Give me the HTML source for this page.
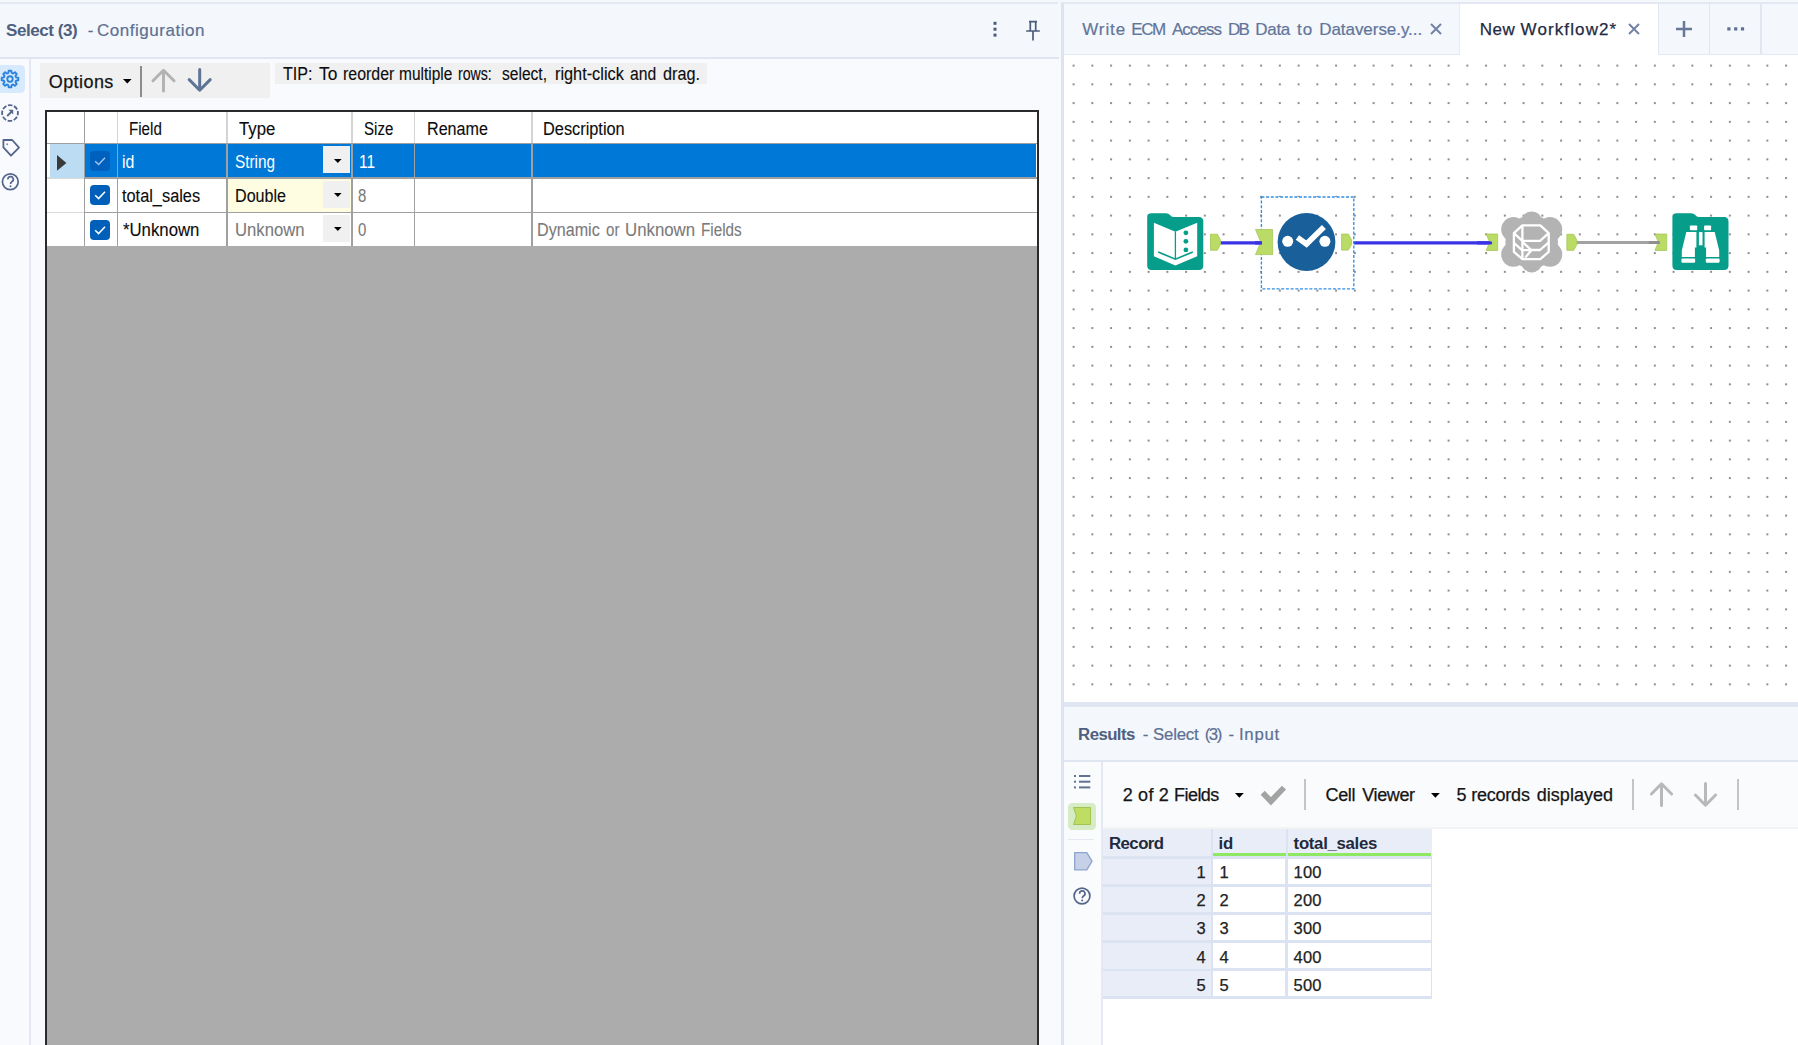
<!DOCTYPE html>
<html lang="en">
<head>
<meta charset="utf-8">
<title>Select (3) - Configuration</title>
<style>
*{box-sizing:border-box;margin:0;padding:0}
html,body{width:1798px;height:1045px;overflow:hidden;background:#f9fafd}
body{position:relative;font-family:"Liberation Sans",sans-serif;color:#1b1b1b}
.a{position:absolute}
.t{position:absolute;white-space:nowrap;line-height:1;transform-origin:0 0}
svg{position:absolute;overflow:visible}
/* ---------- left: configuration panel ---------- */
#cfgHead{left:0;top:0;width:1061px;height:57px;background:#f4f7fb}
#topStrip{left:0;top:0;width:1798px;height:4px;background:#f4f7fb}
#topLine{left:0;top:2px;width:1058px;height:2px;background:#e4e8f2}
#topLine2{left:1061px;top:2px;width:737px;height:2px;background:#e4e8f2}
#cfgHeadLine{left:0;top:56.6px;width:1059px;height:2px;background:#e0e5f2}
#cfgSideLine{left:29px;top:59px;width:2px;height:986px;background:#e3e8f4}
#gearBg{left:0;top:65px;width:24.5px;height:27.6px;background:#d7e9fc;border-radius:0 4.5px 4.5px 0}
#optBar{left:40px;top:63px;width:230px;height:35px;background:#f0f0f0}
#optSep{left:140px;top:66px;width:2px;height:31px;background:#8c8c8c}
#tipBg{left:275px;top:63px;width:432px;height:21px;background:#f0f0f0}
/* grid */
#grid{left:44.8px;top:110px;width:994.2px;height:940px;background:#acacac;border:2.2px solid #2a2a2a}
#gridWhite{left:47px;top:112px;width:990px;height:134px;background:#fff}
.vl{position:absolute;width:1.5px;background:#a0a0a0}
.hl{position:absolute;height:1.5px;background:#a0a0a0}
#selRow{left:85px;top:144px;width:950.6px;height:34px;background:#0078d7}
#selHdr{left:49.8px;top:144.2px;width:33.8px;height:34.2px;z-index:2;background:#bcdcf4}
#dblCell{left:228px;top:179px;width:123px;height:33px;background:#fffde1}
.dd{position:absolute;left:323px;width:27px;height:27px;background:#f0f0f0}
.cb{position:absolute;left:90px;width:20px;height:20px;border-radius:4px;background:#005fb8}
.g{color:#0c0c0c;-webkit-text-stroke:.12px currentColor}
.gray{color:#7a7a7a}

.hb{font-weight:700;color:#4f5f80}
.hlt{color:#5d7094;-webkit-text-stroke:.2px currentColor}
.vl.hd{background:#d4d4d4}
.hl.lt{background:#dadada}
.w{color:#fff;-webkit-text-stroke:0}
.g.gray{-webkit-text-stroke:.1px currentColor}
/* ---------- right side ---------- */
#midLine{z-index:5;left:1060.9px;top:3px;width:2.8px;height:1042px;background:#dde3f0}
#tabBar{left:1063px;top:4px;width:735px;height:50px;background:#f4f7fb}
#tabLine{left:1063px;top:53.6px;width:735px;height:1.6px;background:#e4e9f3}
#tabActive{left:1460px;top:4px;width:197.5px;height:51px;background:#fff}
.tsep{position:absolute;top:4px;width:1.5px;height:50px;background:#e1e6f1}
#canvas{left:1063px;top:55px;width:735px;height:647px;background:#fff}
#resBand{left:1063px;top:702px;width:735px;height:5px;background:#dfe5f1}
#resHead{left:1063px;top:707px;width:735px;height:53px;background:#f4f7fb}
#resHeadLine{left:1063px;top:760px;width:735px;height:2px;background:#dfe5f1}
#resSide{left:1063px;top:762px;width:38px;height:283px;background:#fafbfd}
#resSideLine{left:1101px;top:762px;width:2px;height:283px;background:#e4e9f4}
#resTool{left:1103px;top:762px;width:695px;height:65px;background:#fafbfd}
#resToolLine{left:1103px;top:827px;width:695px;height:2.2px;background:#f2f3f5}
#resBody{left:1103px;top:829px;width:695px;height:216px;background:#fff}

.tin{color:#62759a;-webkit-text-stroke:.2px currentColor}
.tac{color:#1f2a44;-webkit-text-stroke:.25px currentColor}


#ancBg{left:1068.4px;top:803px;width:27.6px;height:27.4px;background:#d6ecc6;border-radius:4.5px}
#resSideSep{left:1068.4px;top:838.6px;width:26px;height:1.4px;background:#e3e8f3}
.tb{color:#151515;-webkit-text-stroke:.25px currentColor}
.tbsep{top:779.2px;width:1.9px;height:31px;background:#c4c4c4}
#rtBg{left:1103.2px;top:829.3px;width:329px;height:169.5px;background:#dbe2f1}
#rtHdr{left:1103.2px;top:829.3px;width:329px;height:27px;background:#e9edf8}
#rtNum{left:1103.2px;top:856px;width:107.6px;height:142.8px;background:#e9edf8}
#rtUl1{left:1213.2px;top:853.2px;width:72.4px;height:3px;background:#8fe862}
#rtUl2{left:1288.2px;top:853.2px;width:142.6px;height:3px;background:#8fe862}
.rc{background:#fff}
.rl{background:#dbe2f1}
.rb{font-weight:700;color:#222b3e}
.rd{color:#222;-webkit-text-stroke:.25px currentColor}
</style>
</head>
<body>
<!-- LEFT PANEL -->
<div class="a" id="cfgHead"></div>
<div class="a" id="topStrip"></div>
<div class="a" id="topLine"></div>
<div class="a" id="topLine2"></div>
<div class="a" id="cfgHeadLine"></div>
<div class="a" id="cfgSideLine"></div>
<div class="a" id="gearBg"></div>
<div class="a" id="optBar"></div>
<div class="a" id="optSep"></div>
<div class="a" id="tipBg"></div>
<div class="a" id="grid"></div>
<div class="a" id="gridWhite"></div>


<!-- header text -->
<span class="t hb" id="hSel" style="left:6.10px;top:22px;font-size:17px;letter-spacing:-0.444px">Select (3)</span>
<span class="t hlt" id="hCfga" style="left:87.80px;top:22px;font-size:17px;letter-spacing:-0.072px">-</span><span class="t hlt" id="hCfgb" style="left:96.90px;top:22px;font-size:17px;letter-spacing:0.531px">Configuration</span>
<!-- header icons: kebab + pin -->
<svg id="kebab" style="left:992px;top:20px" width="6" height="18" viewBox="0 0 6 18"><g fill="#4b5b7c"><rect x="1.5" y="1.8" width="3" height="3"/><rect x="1.5" y="7.7" width="3" height="3"/><rect x="1.5" y="13.6" width="3" height="3"/></g></svg>
<svg id="pin" style="left:1025px;top:20px" width="16" height="22" viewBox="0 0 16 22"><g fill="none" stroke="#4b5b7c" stroke-width="1.7"><path d="M4 1.6 H12 M5.3 1.6 V10.4 M10.7 1.6 V10.4 M1.2 11 H14.8 M8 11 V20.5"/></g></svg>
<!-- sidebar icons -->
<svg id="icoGear" style="left:-0.7px;top:67.8px" width="22" height="22" viewBox="-11 -11 22 22"><g fill="none" stroke="#2a83dc" stroke-width="1.9" stroke-linejoin="round"><circle r="2.7"/><path d="M-1.31 -8.30 L1.31 -8.30 L1.68 -6.07 L3.10 -5.48 L4.94 -6.80 L6.80 -4.94 L5.48 -3.10 L6.07 -1.68 L8.30 -1.31 L8.30 1.31 L6.07 1.68 L5.48 3.10 L6.80 4.94 L4.94 6.80 L3.10 5.48 L1.68 6.07 L1.31 8.30 L-1.31 8.30 L-1.68 6.07 L-3.10 5.48 L-4.94 6.80 L-6.80 4.94 L-5.48 3.10 L-6.07 1.68 L-8.30 1.31 L-8.30 -1.31 L-6.07 -1.68 L-5.48 -3.10 L-6.80 -4.94 L-4.94 -6.80 L-3.10 -5.48 L-1.68 -6.07 Z"/></g></svg>
<svg id="icoNav" style="left:-0.7px;top:101.8px" width="22" height="22" viewBox="-11 -11 22 22"><g fill="none" stroke="#53668a" stroke-width="1.8"><circle r="7.9" stroke-dasharray="4.6 1.6" stroke-dashoffset="2.3"/><path d="M-2.8 3 L1.6 -1.4" stroke-width="1.9"/><path d="M-1.6 -3.2 H3.2 V1.6 Z" fill="#53668a" stroke="none"/></g></svg>
<svg id="icoTag" style="left:0;top:130px" width="24" height="30" viewBox="0 130 24 30"><g fill="none" stroke="#53668a" stroke-width="1.8" stroke-linejoin="round"><path d="M3.4 140 H12.2 L19 147.7 L11 155.7 L3.4 147.4 Z"/><circle cx="7.2" cy="144.2" r="1" fill="#8090ad" stroke="none"/></g></svg>
<svg id="icoHelp" style="left:-0.8px;top:170.3px" width="22" height="22" viewBox="-11 -11 22 22"><g fill="none" stroke="#53668a" stroke-width="1.7"><circle r="7.9" cx=".3" cy=".7"/><path d="M-2.4 -1.8 a2.7 2.7 0 1 1 3.9 2.3 q-1.2 .6 -1.2 2.2" transform="translate(.3 .2)"/><circle cx=".5" cy="5.2" r="1" fill="#53668a" stroke="none"/></g></svg>
<!-- options bar -->
<span class="t tb" id="opt" style="left:48.70px;top:73px;font-size:18px;letter-spacing:0.442px">Options</span>
<svg id="optArrow" style="left:122.6px;top:79.3px" width="9" height="5" viewBox="0 0 9 5"><path d="M0 0 H8.6 L4.3 4.5 Z" fill="#000"/></svg>
<svg id="arrUp" style="left:150px;top:67px" width="28" height="26" viewBox="0 0 28 26"><path d="M13.5 24 V3.5 M3 13.8 L13.5 3.3 L24 13.8" fill="none" stroke="#b3b3b3" stroke-width="3" stroke-linecap="round" stroke-linejoin="round"/></svg>
<svg id="arrDn" style="left:185.5px;top:67px" width="28" height="26" viewBox="0 0 28 26"><path d="M13.7 2.5 V23 M3.2 12.6 L13.7 23.2 L24.2 12.6" fill="none" stroke="#5f7395" stroke-width="3" stroke-linecap="round" stroke-linejoin="round"/></svg>
<span class="t g" id="tipa" style="left:283.00px;top:66px;font-size:17.5px;transform:scaleX(0.9192)">TIP:</span><span class="t g" id="tipb" style="left:318.80px;top:66px;font-size:17.5px;transform:scaleX(0.9900)">To</span><span class="t g" id="tipc" style="left:342.60px;top:66px;font-size:17.5px;transform:scaleX(0.9092)">reorder</span><span class="t g" id="tipd" style="left:398.90px;top:66px;font-size:17.5px;transform:scaleX(0.8837)">multiple</span><span class="t g" id="tipe" style="left:457.70px;top:66px;font-size:17.5px;transform:scaleX(0.8084)">rows:</span><span class="t g" id="tipf" style="left:501.50px;top:66px;font-size:17.5px;transform:scaleX(0.8897)">select,</span><span class="t g" id="tipg" style="left:555.30px;top:66px;font-size:17.5px;transform:scaleX(0.9309)">right-click</span><span class="t g" id="tiph" style="left:630.40px;top:66px;font-size:17.5px;transform:scaleX(0.8972)">and</span><span class="t g" id="tipi" style="left:662.90px;top:66px;font-size:17.5px;transform:scaleX(0.9275)">drag.</span>
<!-- grid body -->
<div class="a" id="selRow"></div>
<div class="a" id="selHdr"></div>
<div class="a" id="dblCell"></div>
<div class="vl" style="left:83.6px;top:112px;height:134px"></div>
<div class="vl" style="left:116.6px;top:144px;height:102px"></div>
<div class="vl" style="left:226.2px;top:144px;height:102px"></div>
<div class="vl" style="left:351.2px;top:144px;height:102px"></div>
<div class="vl" style="left:413.6px;top:144px;height:102px"></div>
<div class="vl" style="left:531.2px;top:144px;height:102px"></div>
<div class="vl hd" style="left:116.6px;top:112px;height:32px"></div>
<div class="vl hd" style="left:226.2px;top:112px;height:32px"></div>
<div class="vl hd" style="left:351.2px;top:112px;height:32px"></div>
<div class="vl hd" style="left:413.6px;top:112px;height:32px"></div>
<div class="vl hd" style="left:531.2px;top:112px;height:32px"></div>
<div class="hl" style="left:47px;top:142.8px;width:990px"></div>
<div class="hl" style="left:85px;top:177.3px;width:952px"></div>
<div class="hl" style="left:85px;top:211.6px;width:952px"></div>
<div class="hl lt" style="left:47px;top:177.3px;width:37px"></div>
<div class="hl lt" style="left:47px;top:211.6px;width:37px"></div>
<!-- row header arrow -->
<svg id="rowArrow" style="z-index:3;left:57px;top:154.5px" width="10" height="16" viewBox="0 0 10 16"><path d="M0 0 L9.4 7.9 L0 15.8 Z" fill="#3a3a3a"/></svg>
<!-- checkboxes -->
<div class="cb" style="top:151px;background:#0060bd"></div>
<div class="cb" style="top:185.4px"></div>
<div class="cb" style="top:219.7px"></div>
<svg id="chk1" style="left:90px;top:151px" width="20" height="20" viewBox="0 0 20 20"><path d="M5.2 10.2 L8.6 13.6 L15 6.8" fill="none" stroke="#a4c8ee" stroke-width="1.4"/></svg>
<svg id="chk2" style="left:90px;top:185.4px" width="20" height="20" viewBox="0 0 20 20"><path d="M5.2 10.2 L8.6 13.6 L15 6.8" fill="none" stroke="#fff" stroke-width="1.5"/></svg>
<svg id="chk3" style="left:90px;top:219.7px" width="20" height="20" viewBox="0 0 20 20"><path d="M5.2 10.2 L8.6 13.6 L15 6.8" fill="none" stroke="#fff" stroke-width="1.5"/></svg>
<!-- dropdown buttons -->
<div class="dd" style="top:146px"></div>
<div class="dd" style="top:180.5px"></div>
<div class="dd" style="top:214.8px"></div>
<svg id="dda1" style="left:333.5px;top:158.5px" width="8" height="5" viewBox="0 0 8 5"><path d="M0 0 H7.6 L3.8 4 Z" fill="#000"/></svg>
<svg id="dda2" style="left:333.5px;top:192.8px" width="8" height="5" viewBox="0 0 8 5"><path d="M0 0 H7.6 L3.8 4 Z" fill="#000"/></svg>
<svg id="dda3" style="left:333.5px;top:227.1px" width="8" height="5" viewBox="0 0 8 5"><path d="M0 0 H7.6 L3.8 4 Z" fill="#000"/></svg>
<!-- grid text -->
<span class="t g" id="gF" style="left:129.40px;top:121px;font-size:17.5px;transform:scaleX(0.8646)">Field</span>
<span class="t g" id="gT" style="left:238.90px;top:121px;font-size:17.5px;transform:scaleX(0.9564)">Type</span>
<span class="t g" id="gS" style="left:363.70px;top:121px;font-size:17.5px;transform:scaleX(0.8606)">Size</span>
<span class="t g" id="gR" style="left:426.70px;top:121px;font-size:17.5px;transform:scaleX(0.9205)">Rename</span>
<span class="t g" id="gD" style="left:543.40px;top:121px;font-size:17.5px;transform:scaleX(0.9332)">Description</span>
<span class="t g w" id="r1a" style="left:122.20px;top:154px;font-size:17.5px;transform:scaleX(0.9101)">id</span>
<span class="t g w" id="r1b" style="left:234.70px;top:154px;font-size:17.5px;transform:scaleX(0.8771)">String</span>
<span class="t g w" id="r1c" style="left:359.00px;top:154px;font-size:17.5px;transform:scaleX(0.8860)">11</span>
<span class="t g" id="r2a" style="left:121.60px;top:188px;font-size:17.5px;transform:scaleX(0.9334)">total_sales</span>
<span class="t g" id="r2b" style="left:234.70px;top:188px;font-size:17.5px;transform:scaleX(0.9212)">Double</span>
<span class="t g gray" id="r2c" style="left:357.70px;top:188px;font-size:17.5px;transform:scaleX(0.8526)">8</span>
<span class="t g" id="r3a" style="left:123.30px;top:222px;font-size:17.5px;transform:scaleX(0.9576)">*Unknown</span>
<span class="t g gray" id="r3b" style="left:234.70px;top:222px;font-size:17.5px;transform:scaleX(0.9525)">Unknown</span>
<span class="t g gray" id="r3c" style="left:357.70px;top:222px;font-size:17.5px;transform:scaleX(0.8526)">0</span>
<span class="t g gray" id="r3da" style="left:537.40px;top:222px;font-size:17.5px;transform:scaleX(0.9210)">Dynamic</span><span class="t g gray" id="r3db" style="left:606.10px;top:222px;font-size:17.5px;transform:scaleX(0.8610)">or</span><span class="t g gray" id="r3dc" style="left:625.10px;top:222px;font-size:17.5px;transform:scaleX(0.9607)">Unknown</span><span class="t g gray" id="r3dd" style="left:701.20px;top:222px;font-size:17.5px;transform:scaleX(0.8718)">Fields</span>

<!-- RIGHT SIDE -->
<div class="a" id="midLine"></div>
<div class="a" id="tabBar"></div>
<div class="a" id="tabLine"></div>
<div class="a" id="tabActive"></div>
<div class="a" id="canvas"></div>

<!-- tabs -->
<div class="tsep" style="left:1458.6px;background:#e6eaf4"></div>
<div class="tsep" style="left:1657.7px"></div>
<div class="tsep" style="left:1708.8px"></div>
<div class="tsep" style="left:1760px"></div>
<span class="t tin" id="tab1a" style="left:1082.20px;top:21px;font-size:17px;letter-spacing:0.910px">Write</span><span class="t tin" id="tab1b" style="left:1131.20px;top:21px;font-size:17px;letter-spacing:-1.341px">ECM</span><span class="t tin" id="tab1c" style="left:1171.90px;top:21px;font-size:17px;letter-spacing:-0.939px">Access</span><span class="t tin" id="tab1d" style="left:1228.00px;top:21px;font-size:17px;letter-spacing:-1.825px">DB</span><span class="t tin" id="tab1e" style="left:1255.30px;top:21px;font-size:17px;letter-spacing:-0.307px">Data</span><span class="t tin" id="tab1f" style="left:1296.90px;top:21px;font-size:17px;letter-spacing:1.012px">to</span><span class="t tin" id="tab1g" style="left:1319.20px;top:21px;font-size:17px;letter-spacing:-0.048px">Dataverse.y...</span>
<span class="t tac" id="tab2a" style="left:1479.80px;top:21px;font-size:17px;letter-spacing:0.442px">New</span><span class="t tac" id="tab2b" style="left:1520.60px;top:21px;font-size:17px;letter-spacing:1.105px">Workflow2*</span>
<svg id="x1" style="left:1429.5px;top:23px" width="12" height="12" viewBox="0 0 12 12"><path d="M1 1 L11 11 M11 1 L1 11" stroke="#7383a3" stroke-width="2" fill="none"/></svg>
<svg id="x2" style="left:1627.7px;top:23px" width="12" height="12" viewBox="0 0 12 12"><path d="M1 1 L11 11 M11 1 L1 11" stroke="#7383a3" stroke-width="2" fill="none"/></svg>
<svg id="plus" style="left:1676px;top:21px" width="16" height="16" viewBox="0 0 16 16"><path d="M8 0 V16 M0 8 H16" stroke="#687899" stroke-width="2.5" fill="none"/></svg>
<svg id="more" style="left:1727px;top:27.4px" width="18" height="4" viewBox="0 0 18 4"><g fill="#5e6f91"><rect x=".3" y=".3" width="3.2" height="3.2"/><rect x="7.1" y=".3" width="3.2" height="3.2"/><rect x="13.9" y=".3" width="3.2" height="3.2"/></g></svg>
<!-- canvas -->
<svg id="cv" style="left:1063px;top:55px" width="735" height="647" viewBox="1063 55 735 647">
<defs>
<pattern id="dots" x="1072.6" y="64.6" width="18.75" height="18.75" patternUnits="userSpaceOnUse"><rect x="0" y="0" width="2" height="2" fill="#8e8e8e"/></pattern>
<g id="aOut"><path d="M.6 .3 H7.4 L10.6 6.2 V10.4 L7.4 16.3 H.6 Z" fill="#badb66" stroke="#a9ca5c" stroke-width=".9" stroke-linejoin="round"/></g>
</defs>
<rect x="1063" y="55" width="735" height="646" fill="url(#dots)"/>
<!-- connections -->
<path d="M1220 242.9 H1262" stroke="#3a33e6" stroke-width="3.4" fill="none"/>
<path d="M1352 242.9 H1491" stroke="#3a33e6" stroke-width="3.4" fill="none"/>
<path d="M1576 242.6 H1661" stroke="#a2a2a2" stroke-width="3" fill="none"/>
<!-- selection box -->
<rect x="1261.4" y="197" width="92.4" height="91.8" fill="#fff"/>
<rect x="1277" y="213" width="60" height="60" fill="url(#dots)"/>
<rect x="1261.4" y="197" width="92.4" height="91.8" fill="none" stroke="#318ee8" stroke-width="1.35" stroke-dasharray="3 1.7"/>
<!-- input data tool -->
<g id="tInput">
<path d="M1151.5 213.2 H1166 Q1168.5 213.2 1170 215 Q1171.3 217 1173.5 217 H1198.8 Q1203.3 217 1203.3 221.5 V265.5 Q1203.3 270 1198.8 270 H1151.7 Q1147.2 270 1147.2 265.5 V217.5 Q1147.2 213.2 1151.5 213.2 Z" fill="#069d8b"/>
<path d="M1153.9 222.8 L1175.4 231.7 L1197.2 222.8 V256.2 L1175.4 265.5 L1153.9 256.2 Z" fill="#fff"/>
<path d="M1175.4 231.5 V259" stroke="#069d8b" stroke-width="1.3"/>
<path d="M1158.2 252 L1175.4 259.2 L1192.8 252" stroke="#069d8b" stroke-width="1.7" fill="none"/>
<circle cx="1185.9" cy="232.8" r="2.4" fill="#069d8b"/><circle cx="1185.9" cy="241.3" r="2.4" fill="#069d8b"/><circle cx="1185.9" cy="249.9" r="2.4" fill="#069d8b"/>
</g>
<use href="#aOut" x="1209.9" y="233.9"/>
<!-- select tool -->
<path d="M1255.5 229.5 H1272.6 V254.6 H1255.5 L1260.8 242.1 Z" fill="#badb66" stroke="#a5c659" stroke-width=".8"/>
<path d="M1255 242.9 H1262" stroke="#3a33e6" stroke-width="3.4" fill="none"/>
<circle cx="1306.5" cy="242" r="28.9" fill="#19609a"/>
<circle cx="1287.7" cy="241.3" r="5.5" fill="#fff"/><circle cx="1324.9" cy="241.3" r="5.5" fill="#fff"/>
<path d="M1297.4 237.4 L1306.5 244.1 L1323.9 226.9" fill="none" stroke="#fff" stroke-width="5.6"/>
<use href="#aOut" x="1341" y="233.8"/>
<!-- grey in-db tool -->
<path d="M1486.2 234 H1497.7 V250.5 H1486.2 L1489.6 242.2 Z" fill="#badb66" stroke="#a5c659" stroke-width=".8"/>
<path d="M1478 242.9 H1490.5" stroke="#3a33e6" stroke-width="3.4" stroke-linecap="round" fill="none"/>
<g fill="#b3b3b3"><circle cx="1531.7" cy="241.9" r="26.3"/><circle cx="1531.7" cy="222" r="10.6"/><circle cx="1531.7" cy="261.8" r="10.6"/><circle cx="1513.4" cy="229.3" r="12.2"/><circle cx="1550" cy="229.3" r="12.2"/><circle cx="1513.4" cy="254.5" r="12.2"/><circle cx="1550" cy="254.5" r="12.2"/></g>
<g fill="none" stroke="#fff" stroke-width="2.3" stroke-linejoin="round">
<path d="M1522.4 225.3 H1540.3 L1548.7 233.2 V251.8 L1540.3 259.2 H1522.4 L1513.9 251.8 V233.2 Z"/>
<path d="M1522.4 225.3 V259.2"/>
<path d="M1548.7 233.2 L1540 240.8 H1522.4"/>
<path d="M1548.7 242.4 L1540 250 H1531.3 L1522.6 242.1"/>
<path d="M1522.4 250.2 H1531.3 L1525.3 257.6"/>
<path d="M1513.9 233.2 L1522.4 240.8 M1513.9 242.9 L1522.4 250.5"/>
</g>
<use href="#aOut" x="1566.3" y="234"/>
<!-- browse tool -->
<path d="M1654.9 234 H1666.7 V250.4 H1654.9 L1658.4 242.2 Z" fill="#badb66" stroke="#a5c659" stroke-width=".8"/>
<path d="M1650 242.6 H1658.6" stroke="#8f8f8f" stroke-width="3" stroke-linecap="round" fill="none"/>
<path d="M1676.8 213.2 H1691.3 Q1693.8 213.2 1695.3 215 Q1696.6 217 1698.8 217 H1724 Q1728.5 217 1728.5 221.5 V265.5 Q1728.5 270 1724 270 H1676.9 Q1672.4 270 1672.4 265.5 V217.5 Q1672.4 213.2 1676.8 213.2 Z" fill="#069d8b"/>
<g fill="#fff">
<rect x="1689.9" y="225.4" width="7.3" height="4.8" rx=".8"/><rect x="1704.1" y="225.4" width="7" height="4.8" rx=".8"/>
<path d="M1686.3 232.1 H1696.4 V247.6 H1694.9 V257 H1681.8 V250.4 Z"/>
<path d="M1714.7 232.1 H1704.6 V247.6 H1706.1 V257 H1719.2 V250.4 Z"/>
<rect x="1698.9" y="232.1" width="3.6" height="13.2"/>
<rect x="1681.4" y="258.6" width="13.8" height="4.1" rx="1.2"/><rect x="1705.8" y="258.6" width="13.8" height="4.1" rx="1.2"/>
</g>
</svg>
<div class="a" id="resBand"></div>
<div class="a" id="resHead"></div>
<div class="a" id="resHeadLine"></div>
<div class="a" id="resSide"></div>
<div class="a" id="resSideLine"></div>
<div class="a" id="resTool"></div>
<div class="a" id="resToolLine"></div>
<div class="a" id="resBody"></div>

<!-- results header -->
<span class="t hb" id="rH" style="left:1078.10px;top:727px;font-size:16.8px;letter-spacing:-0.571px">Results</span>
<span class="t hlt" id="rSa" style="left:1142.70px;top:727px;font-size:16.8px;letter-spacing:-0.194px">-</span><span class="t hlt" id="rSb" style="left:1153.10px;top:727px;font-size:16.8px;letter-spacing:-0.228px">Select</span><span class="t hlt" id="rSc" style="left:1204.70px;top:727px;font-size:16.8px;letter-spacing:-1.458px">(3)</span><span class="t hlt" id="rSd" style="left:1228.50px;top:727px;font-size:16.8px;letter-spacing:-0.294px">-</span><span class="t hlt" id="rSe" style="left:1238.90px;top:727px;font-size:16.8px;letter-spacing:0.768px">Input</span>
<!-- results sidebar icons -->
<svg id="icoList" style="left:1074px;top:774.4px" width="17" height="15" viewBox="0 0 17 15"><g fill="#62738f"><rect x="0" y="1" width="2" height="2"/><rect x="0" y="6.7" width="2" height="2"/><rect x="0" y="12.4" width="2" height="2"/><rect x="5" y="1" width="11.3" height="2"/><rect x="5" y="6.7" width="11.3" height="2"/><rect x="5" y="12.4" width="11.3" height="2"/></g></svg>
<div class="a" id="ancBg"></div>
<svg id="icoAncIn" style="left:1073px;top:807.1px" width="18" height="18" viewBox="0 0 18 18"><path d="M.5 .5 H17.5 V17.5 H.5 L3.4 9 Z" fill="#bedd62" stroke="#a3c455" stroke-width="1"/></svg>
<div class="a" id="resSideSep"></div>
<svg id="icoAncOut" style="left:1073.6px;top:852.4px" width="19" height="19" viewBox="0 0 19 19"><path d="M.7 .7 H12.8 L18 9.2 L12.8 17.8 H.7 Z" fill="#c6d1e7" stroke="#8ea3cd" stroke-width="1.3" stroke-linejoin="round"/></svg>
<svg id="icoHelp2" style="left:1070.6px;top:885px" width="22" height="22" viewBox="-11 -11 22 22"><g fill="none" stroke="#53668a" stroke-width="1.7"><circle r="7.9" cx="0" cy="0"/><path d="M-2.4 -1.8 a2.7 2.7 0 1 1 3.9 2.3 q-1.2 .6 -1.2 2.2" transform="translate(0 -.5)"/><circle cx=".2" cy="4.5" r="1" fill="#53668a" stroke="none"/></g></svg>
<!-- results toolbar -->
<span class="t tb" id="tb1a" style="left:1122.80px;top:786px;font-size:18px;letter-spacing:-1.616px">2</span><span class="t tb" id="tb1b" style="left:1138.10px;top:786px;font-size:18px;letter-spacing:0.284px">of</span><span class="t tb" id="tb1c" style="left:1158.80px;top:786px;font-size:18px;letter-spacing:-1.616px">2</span><span class="t tb" id="tb1d" style="left:1174.10px;top:786px;font-size:18px;letter-spacing:-0.563px">Fields</span>
<svg id="tbArr1" style="left:1234.8px;top:793px" width="9" height="5" viewBox="0 0 9 5"><path d="M0 0 H8.8 L4.4 4.8 Z" fill="#000"/></svg>
<svg id="tbChk" style="left:1259.6px;top:784.2px" width="27" height="22" viewBox="0 0 27 22"><path d="M2.7 8.8 L10.9 17.3 L24 3.6" fill="none" stroke="#a2a4a3" stroke-width="5.7"/></svg>
<div class="a tbsep" style="left:1304px"></div>
<span class="t tb" id="tb2a" style="left:1325.50px;top:786px;font-size:18px;letter-spacing:-0.372px">Cell</span><span class="t tb" id="tb2b" style="left:1362.30px;top:786px;font-size:18px;letter-spacing:-0.401px">Viewer</span>
<svg id="tbArr2" style="left:1430.5px;top:793px" width="9" height="5" viewBox="0 0 9 5"><path d="M0 0 H8.8 L4.4 4.8 Z" fill="#000"/></svg>
<span class="t tb" id="tb3a" style="left:1456.50px;top:786px;font-size:18px;letter-spacing:-0.816px">5</span><span class="t tb" id="tb3b" style="left:1471.20px;top:786px;font-size:18px;letter-spacing:-0.222px">records</span><span class="t tb" id="tb3c" style="left:1536.80px;top:786px;font-size:18px;letter-spacing:0.017px">displayed</span>
<div class="a tbsep" style="left:1632.3px"></div>
<svg id="tbUp" style="left:1648.3px;top:781px" width="28" height="26" viewBox="0 0 28 26"><path d="M13.5 24.5 V3 M3.4 13 L13.5 2.8 L23.6 13" fill="none" stroke="#b8bab9" stroke-width="3" stroke-linecap="round" stroke-linejoin="round"/></svg>
<svg id="tbDn" style="left:1692.4px;top:781.8px" width="28" height="26" viewBox="0 0 28 26"><path d="M13.5 1.5 V23 M3.4 13 L13.5 23.2 L23.6 13" fill="none" stroke="#b8bab9" stroke-width="3" stroke-linecap="round" stroke-linejoin="round"/></svg>
<div class="a tbsep" style="left:1737px"></div>
<!-- results table -->
<div class="a" id="rtBg"></div>
<div class="a" id="rtHdr"></div>
<div class="a" id="rtNum"></div>
<div class="a" id="rtUl1"></div>
<div class="a" id="rtUl2"></div>
<div class="a rc" style="left:1213.2px;top:858.6px;width:72.2px;height:25.6px"></div><div class="a rc" style="left:1288.2px;top:858.6px;width:142.6px;height:25.6px"></div>
<div class="a rc" style="left:1213.2px;top:886.6px;width:72.2px;height:25.7px"></div><div class="a rc" style="left:1288.2px;top:886.6px;width:142.6px;height:25.7px"></div>
<div class="a rc" style="left:1213.2px;top:914.7px;width:72.2px;height:25.7px"></div><div class="a rc" style="left:1288.2px;top:914.7px;width:142.6px;height:25.7px"></div>
<div class="a rc" style="left:1213.2px;top:942.8px;width:72.2px;height:25.7px"></div><div class="a rc" style="left:1288.2px;top:942.8px;width:142.6px;height:25.7px"></div>
<div class="a rc" style="left:1213.2px;top:970.9px;width:72.2px;height:25.5px"></div><div class="a rc" style="left:1288.2px;top:970.9px;width:142.6px;height:25.5px"></div>
<div class="a rl" style="left:1103.2px;top:856.2px;width:108px;height:2.4px"></div><div class="a rl" style="left:1103.2px;top:884.2px;width:108px;height:2.4px"></div><div class="a rl" style="left:1103.2px;top:912.3px;width:108px;height:2.4px"></div><div class="a rl" style="left:1103.2px;top:940.4px;width:108px;height:2.4px"></div><div class="a rl" style="left:1103.2px;top:968.5px;width:108px;height:2.4px"></div><div class="a rl" style="left:1103.2px;top:996.4px;width:108px;height:2.4px"></div>
<div class="a rl" style="left:1210.8px;top:829.3px;width:2.4px;height:169.5px"></div><div class="a rl" style="left:1285.6px;top:829.3px;width:2.4px;height:169.5px"></div>
<span class="t rb" id="thR" style="left:1109.00px;top:836px;font-size:16.8px;letter-spacing:-0.546px">Record</span>
<span class="t rb" id="thI" style="left:1218.60px;top:836px;font-size:16.8px;letter-spacing:-0.322px">id</span>
<span class="t rb" id="thT" style="left:1293.60px;top:836px;font-size:16.8px;letter-spacing:-0.305px">total_sales</span>
<span class="t rd" id="n0" style="left:1196.41px;top:864px;font-size:16.5px">1</span><span class="t rd" id="i0" style="left:1219.40px;top:864px;font-size:16.5px">1</span><span class="t rd" id="v0" style="left:1293.60px;top:864px;font-size:16.5px;letter-spacing:0.134px">100</span>
<span class="t rd" id="n1" style="left:1196.41px;top:892px;font-size:16.5px">2</span><span class="t rd" id="i1" style="left:1219.40px;top:892px;font-size:16.5px">2</span><span class="t rd" id="v1" style="left:1293.60px;top:892px;font-size:16.5px;letter-spacing:0.134px">200</span>
<span class="t rd" id="n2" style="left:1196.41px;top:920px;font-size:16.5px">3</span><span class="t rd" id="i2" style="left:1219.40px;top:920px;font-size:16.5px">3</span><span class="t rd" id="v2" style="left:1293.60px;top:920px;font-size:16.5px;letter-spacing:0.134px">300</span>
<span class="t rd" id="n3" style="left:1196.41px;top:949px;font-size:16.5px">4</span><span class="t rd" id="i3" style="left:1219.40px;top:949px;font-size:16.5px">4</span><span class="t rd" id="v3" style="left:1293.60px;top:949px;font-size:16.5px;letter-spacing:0.134px">400</span>
<span class="t rd" id="n4" style="left:1196.41px;top:977px;font-size:16.5px">5</span><span class="t rd" id="i4" style="left:1219.40px;top:977px;font-size:16.5px">5</span><span class="t rd" id="v4" style="left:1293.60px;top:977px;font-size:16.5px;letter-spacing:0.134px">500</span>
</body>
</html>
